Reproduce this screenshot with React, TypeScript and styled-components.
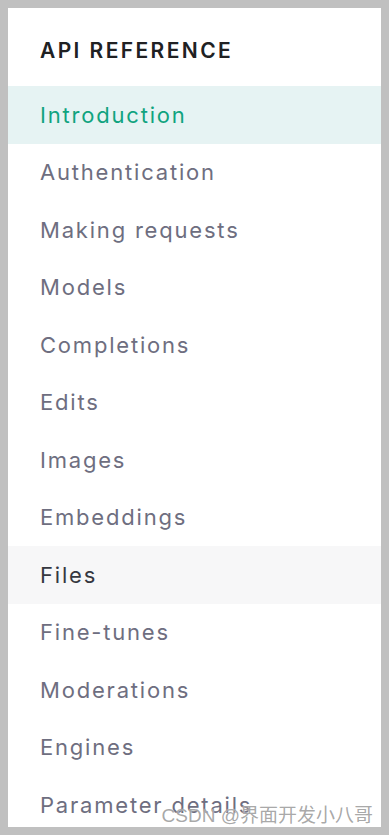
import React from 'react';
import styled, { createGlobalStyle } from 'styled-components';

const GlobalStyle = createGlobalStyle`
  html, body {
    margin: 0;
    padding: 0;
    background: #c0c0c0;
  }
  body {
    font-family: 'Inter', 'Noto Sans', sans-serif;
    -webkit-font-smoothing: antialiased;
  }
`;

const Frame = styled.div`
  padding: 8px;
  position: relative;
`;

const Panel = styled.nav`
  background: #fff;
  height: 819px;
  overflow: hidden;
  display: flex;
  flex-direction: column;
`;

const Heading = styled.div`
  height: 78px;
  flex-shrink: 0;
  box-sizing: border-box;
  padding: 31px 0 0 32px;
  font-size: 21px;
  line-height: 24px;
  font-weight: 600;
  letter-spacing: 2.4px;
  color: #202123;
`;

const NavItem = styled.a<{ $active?: boolean; $hover?: boolean }>`
  height: 57.5px;
  flex-shrink: 0;
  display: flex;
  align-items: center;
  padding-left: 32px;
  font-size: 22px;
  letter-spacing: 1.8px;
  color: ${({ $active, $hover }) =>
    $active ? '#10a37f' : $hover ? '#353740' : '#6e6e80'};
  background: ${({ $active, $hover }) =>
    $active ? '#e6f3f3' : $hover ? '#f7f7f8' : 'transparent'};
  text-decoration: none;
  cursor: pointer;
`;

const Watermark = styled.div`
  position: absolute;
  right: 16px;
  bottom: 8px;
  font-family: 'Liberation Sans', 'Noto Sans CJK SC', sans-serif;
  font-size: 19px;
  color: rgba(130, 130, 130, 0.7);
  text-shadow: 0 0 1px #fff;
  pointer-events: none;
`;

const items = [
  'Introduction',
  'Authentication',
  'Making requests',
  'Models',
  'Completions',
  'Edits',
  'Images',
  'Embeddings',
  'Files',
  'Fine-tunes',
  'Moderations',
  'Engines',
  'Parameter details',
];

export default function App() {
  return (
    <>
      <GlobalStyle />
      <Frame>
        <Panel>
          <Heading>API REFERENCE</Heading>
          {items.map(name => (
            <NavItem
              key={name}
              $active={name === 'Introduction'}
              $hover={name === 'Files'}
            >
              {name}
            </NavItem>
          ))}
        </Panel>
        <Watermark>CSDN @界面开发小八哥</Watermark>
      </Frame>
    </>
  );
}
